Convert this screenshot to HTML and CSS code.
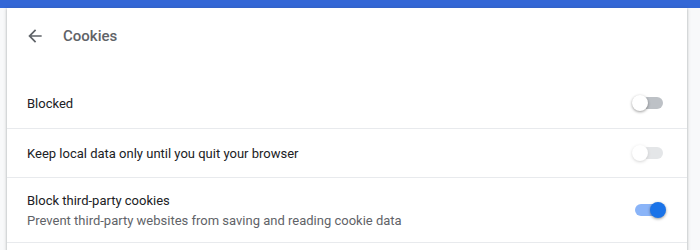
FILE: index.html
```html
<!DOCTYPE html>
<html>
<head>
<meta charset="utf-8">
<link rel="stylesheet" href="styles.css">
</head>
<body>
<div class="topbar"></div>
<div class="page">
  <div class="card">
    <div class="header">
      <span class="back">
        <svg viewBox="0 0 24 24" width="20" height="20"><path d="M20 11H7.83l5.59-5.59L12 4l-8 8 8 8 1.41-1.41L7.83 13H20v-2z" fill="#5f6368"/></svg>
      </span>
      <h1 class="title">Cookies</h1>
    </div>
    <div class="row first">
      <div class="label">Blocked</div>
      <span class="toggle off"><span class="bar"></span><span class="knob"></span></span>
    </div>
    <div class="row">
      <div class="label">Keep local data only until you quit your browser</div>
      <span class="toggle off disabled"><span class="bar"></span><span class="knob"></span></span>
    </div>
    <div class="row tall">
      <div class="label">
        <div>Block third-party cookies</div>
        <div class="secondary">Prevent third-party websites from saving and reading cookie data</div>
      </div>
      <span class="toggle on"><span class="bar"></span><span class="knob"></span></span>
    </div>
    <div class="row"></div>
  </div>
</div>
</body>
</html>
```
FILE: styles.css
```css
html, body {
  margin: 0;
  padding: 0;
  background: #f8f9fa;
  font-family: Roboto, "Liberation Sans", sans-serif;
  font-size: 13px;
  color: #202124;
  overflow: hidden;
  height: 250px;
}
.topbar {
  height: 8px;
  background: #3367d6;
}
.page {
  padding-left: 7px;
}
.card {
  width: 680px;
  background: #fff;
  box-shadow: 0 1px 2px 0 rgba(60,64,67,.3), 0 1px 3px 1px rgba(60,64,67,.15);
}
.header {
  height: 56px;
  display: flex;
  align-items: center;
  padding-left: 18px;
  margin-bottom: 14px;
}
.back {
  display: flex;
  width: 20px;
  height: 20px;
}
.title {
  margin: 0 0 0 18px;
  font-size: 15px;
  font-weight: 500;
  color: #5f6368;
}
.row {
  display: flex;
  align-items: center;
  justify-content: space-between;
  min-height: 48px;
  padding: 0 21px 0 20px;
  border-top: 1px solid #e8eaed;
}
.row.first {
  border-top: none;
  min-height: 50px;
}
.row.tall {
  min-height: 64px;
}
.label {
  line-height: 20px;
  padding-top: 1px;
}
.secondary {
  color: #5f6368;
}
.toggle {
  position: relative;
  width: 34px;
  height: 16px;
  flex: none;
}
.toggle .bar {
  position: absolute;
  left: 3px;
  top: 2px;
  width: 28px;
  height: 12px;
  border-radius: 6px;
  background: #bdc1c6;
}
.toggle .knob {
  position: absolute;
  left: 0;
  top: 0;
  width: 16px;
  height: 16px;
  border-radius: 50%;
  background: #fff;
  box-shadow: 0 1px 3px 0 rgba(0,0,0,.4);
}
.toggle.disabled {
  opacity: .4;
}
.toggle.on .bar {
  background: #8ab4f8;
}
.toggle.on .knob {
  left: 18px;
  background: #1a73e8;
}
```
